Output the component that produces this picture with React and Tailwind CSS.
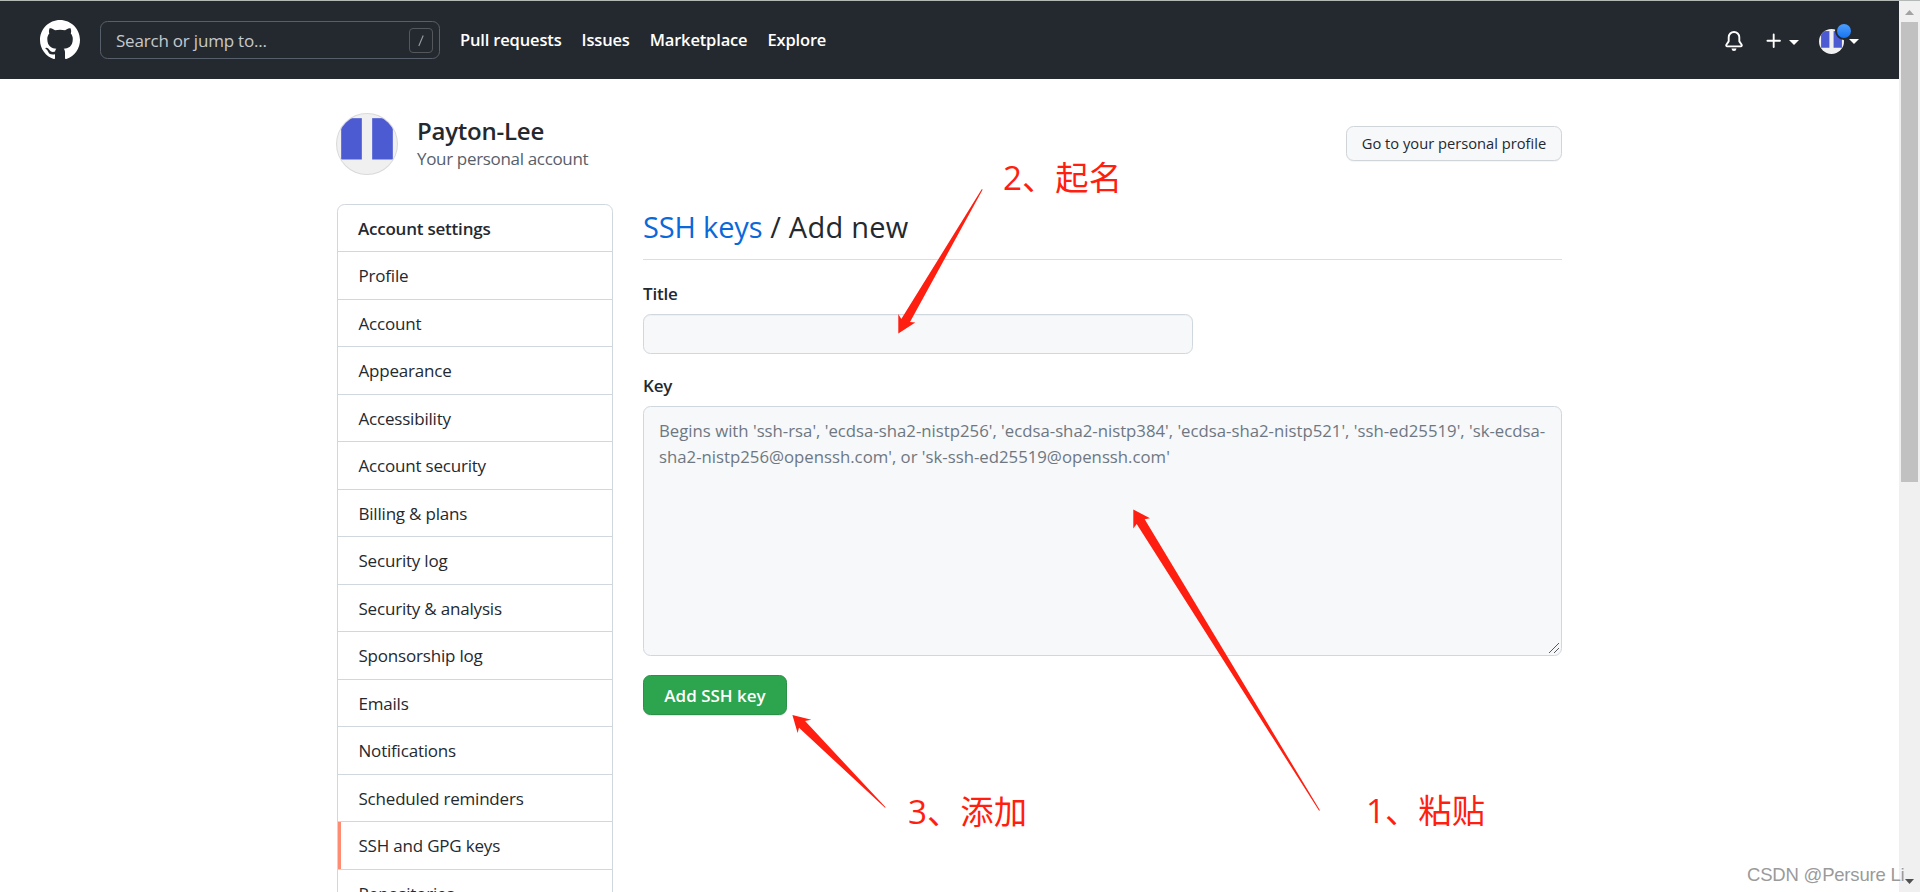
import React from "react";

const settings = [
  "Profile",
  "Account",
  "Appearance",
  "Accessibility",
  "Account security",
  "Billing & plans",
  "Security log",
  "Security & analysis",
  "Sponsorship log",
  "Emails",
  "Notifications",
  "Scheduled reminders",
  "SSH and GPG keys",
  "Repositories",
];

const navLinks = ["Pull requests", "Issues", "Marketplace", "Explore"];

function Identicon({ className }) {
  return (
    <svg viewBox="0 0 420 420" className={className}>
      <rect width="420" height="420" fill="#f0f0f0" />
      <rect x="35" y="35" width="140" height="280" fill="#4d5bd2" />
      <rect x="245" y="35" width="140" height="280" fill="#4d5bd2" />
    </svg>
  );
}

function Caret({ className }) {
  return (
    <svg viewBox="0 0 10 5" className={"h-[5px] w-[10px] fill-white " + className}>
      <path d="M0 0h10L5 5z" />
    </svg>
  );
}

function Header() {
  return (
    <header className="flex h-[78px] shrink-0 items-center bg-[#24292f] px-10 text-white">
      <svg viewBox="0 0 16 16" className="size-10 shrink-0 fill-white">
        <path
          fillRule="evenodd"
          d="M8 0C3.58 0 0 3.58 0 8c0 3.54 2.29 6.53 5.47 7.59.4.07.55-.17.55-.38 0-.19-.01-.82-.01-1.49-2.01.37-2.53-.49-2.69-.94-.09-.23-.48-.94-.82-1.13-.28-.15-.68-.52-.01-.53.63-.01 1.08.58 1.23.82.72 1.21 1.87.87 2.33.66.07-.52.28-.87.51-1.07-1.78-.2-3.64-.89-3.64-3.95 0-.87.31-1.59.82-2.15-.08-.2-.36-1.02.08-2.12 0 0 .67-.21 2.2.82.64-.18 1.32-.27 2-.27.68 0 1.36.09 2 .27 1.53-1.04 2.2-.82 2.2-.82.44 1.1.16 1.92.08 2.12.51.56.82 1.27.82 2.15 0 3.07-1.87 3.75-3.65 3.95.29.25.54.73.54 1.48 0 1.07-.01 1.93-.01 2.2 0 .21.15.46.55.38A8.013 8.013 0 0016 8c0-4.42-3.58-8-8-8z"
        />
      </svg>
      <div className="ml-5 flex h-[38px] w-[340px] items-center justify-between rounded-[7.5px] border border-[#57606a] pr-1.5 pl-[15px]">
        <span className="pt-px text-[17px] tracking-[-0.2px] text-[#c6c9cc]">Search or jump to...</span>
        <svg viewBox="0 0 24 25" className="h-[25px] w-6" fill="none">
          <rect x="0.5" y="0.5" width="23" height="24" rx="3.5" stroke="#54585d" />
          <path d="M14.2 7.5 9.8 18" stroke="#9a9da1" strokeWidth="1.1" />
        </svg>
      </div>
      <nav className="ml-5 flex gap-5 pt-px text-[16.5px] font-semibold tracking-[-0.16px]">
        {navLinks.map((link) => (
          <a key={link}>{link}</a>
        ))}
      </nav>
      <div className="ml-auto flex items-center">
        <svg viewBox="0 0 16 16" className="mt-0.5 size-5 fill-white">
          <path d="M8 16a2 2 0 001.985-1.75c.017-.137-.097-.25-.235-.25h-3.5c-.138 0-.252.113-.235.25A2 2 0 008 16z" />
          <path
            fillRule="evenodd"
            d="M8 1.5A3.5 3.5 0 004.5 5v2.947c0 .346-.102.683-.294.97l-1.703 2.556a.018.018 0 00-.003.01l.001.006c0 .002.002.004.004.006a.017.017 0 00.006.004l.007.001h10.964l.007-.001a.016.016 0 00.006-.004.016.016 0 00.004-.006l.001-.007a.017.017 0 00-.003-.01l-1.703-2.554a1.75 1.75 0 01-.294-.97V5A3.5 3.5 0 008 1.5zM3 5a5 5 0 0110 0v2.947c0 .05.015.098.042.139l1.703 2.555A1.518 1.518 0 0113.482 13H2.518a1.518 1.518 0 01-1.263-2.36l1.703-2.554A.25.25 0 003 7.947V5z"
          />
        </svg>
        <svg viewBox="0 0 16 16" className="mt-0.5 ml-[19.5px] size-5 fill-white">
          <path d="M7.75 2a.75.75 0 01.75.75V7h4.25a.75.75 0 110 1.5H8.5v4.25a.75.75 0 11-1.5 0V8.5H2.75a.75.75 0 010-1.5H7V2.75A.75.75 0 017.75 2z" />
        </svg>
        <Caret className="mt-[5px] ml-[5.5px]" />
        <div className="relative mt-[3px] ml-5 size-[25px]">
          <Identicon className="size-[25px] rounded-full" />
          <span className="absolute -top-[7px] left-4 size-[18px] rounded-full border-2 border-[#24292f] bg-linear-to-b from-[#54a3ff] to-[#006eed] bg-origin-border" />
        </div>
        <Caret className="mt-[3px] ml-[5px]" />
      </div>
    </header>
  );
}

function Sidebar() {
  return (
    <nav className="w-[276px] shrink-0 rounded-t-[7.5px] border border-[#d0d7de] text-[17px] tracking-[-0.2px]">
      <h2 className="flex h-[47.5px] items-center border-b border-[#d0d7de] pt-px pl-5 font-semibold tracking-[-0.22px]">
        Account settings
      </h2>
      {settings.map((item) => (
        <a
          key={item}
          className={
            "flex h-[47.5px] items-center border-b border-[#d0d7de] pt-px pl-[20.5px] " +
            (item === "SSH and GPG keys"
              ? "bg-[linear-gradient(#fd8c73,#fd8c73)] bg-[length:3px_100%] bg-no-repeat"
              : "")
          }
        >
          {item}
        </a>
      ))}
    </nav>
  );
}

function KeyForm() {
  return (
    <main className="flex flex-1 flex-col">
      <h1 className="h-[56.25px] border-b border-[#d8dee4] text-[29px] leading-[46px] tracking-[0.25px]">
        <a className="tracking-[-0.15px] text-[#0969da]">SSH keys</a> / Add new
      </h1>
      <label className="mt-[21.9px] text-[17px] leading-6 font-semibold tracking-[-0.2px]">Title</label>
      <input className="mt-[8.1px] h-10 w-[550px] rounded-[7.5px] border border-[#d0d7de] bg-[#f6f8fa] shadow-[inset_0_1px_0_rgba(208,215,222,0.2)]" />
      <label className="mt-[19.9px] text-[17px] leading-6 font-semibold tracking-[-0.2px]">Key</label>
      <div className="relative mt-[8.1px] h-[250px]">
        <textarea
          className="block h-full w-full resize-none rounded-[7.5px] border border-[#d0d7de] bg-[#f6f8fa] pt-[11px] pr-3 pl-[15px] text-[16.75px] leading-[26.25px] placeholder:text-[#6e7781]"
          placeholder="Begins with 'ssh-rsa', 'ecdsa-sha2-nistp256', 'ecdsa-sha2-nistp384', 'ecdsa-sha2-nistp521', 'ssh-ed25519', 'sk-ecdsa-sha2-nistp256@openssh.com', or 'sk-ssh-ed25519@openssh.com'"
        />
        <svg viewBox="0 0 10 10" className="absolute right-[3px] bottom-[3px] size-2.5 stroke-[#57595c]" fill="none">
          <path d="M0 10 10 0M5 10l5-5" />
        </svg>
      </div>
      <button className="mt-[19px] h-10 w-36 rounded-[7.5px] border border-[#2a9147] bg-[#2da44e] pt-px text-[17px] font-semibold text-white shadow-[0_1px_0_rgba(27,31,36,0.1)]">
        Add SSH key
      </button>
    </main>
  );
}

function Scrollbar() {
  return (
    <div className="flex w-[21px] shrink-0 flex-col items-center bg-[#f0f0f0] pt-[9px] pb-2">
      <svg viewBox="0 0 9 5" className="h-[5px] w-[9px] fill-[#a3a3a3]">
        <path d="M4.5 0 9 5H0z" />
      </svg>
      <div className="mt-[7px] h-[460px] w-[17px] bg-[#c1c1c1]" />
      <svg viewBox="0 0 9 5" className="mt-auto h-[5px] w-[9px] fill-[#505050]">
        <path d="M0 0h9L4.5 5z" />
      </svg>
    </div>
  );
}

function Annotations() {
  return (
    <div className="pointer-events-none absolute inset-x-0 -top-px h-[892px] font-['Open_Sans','Noto_Sans_CJK_SC',sans-serif] text-[33.3px] leading-[40px] whitespace-nowrap text-[#ff1f10]">
      <svg viewBox="0 0 1920 892" className="absolute inset-0 h-[892px] w-[1920px] fill-[#ff1f10]">
        <path d="M898.3 333.5V314l3 5 80.4-129.7 1 .2L910 322l5.3.4z" />
        <path d="M1133.3 509.5 1150 518.3 1144.7 519.3 1319.9 810.3 1319.1 810.8 1136.7 524 1133.3 528.5z" />
        <path d="M792.4 715 811.3 719.7 805.1 721 885.6 807.3 885 807.8 799 727.7 797.6 733z" />
      </svg>
      <span className="absolute top-[157px] left-[1003px]">2、起名</span>
      <span className="absolute top-[790px] left-[1366px]">1、粘贴</span>
      <span className="absolute top-[791px] left-[908px]">3、添加</span>
      <span className="absolute top-[863px] left-[1747px] font-['Liberation_Sans',sans-serif] text-[18.5px] leading-6 tracking-[-0.2px] text-[#9a9a9a] [text-shadow:-1px_-1px_0_rgba(255,255,255,0.7)]">
        CSDN @Persure Li
      </span>
    </div>
  );
}

export default function App() {
  return (
    <div className="relative flex h-[892px] w-full overflow-hidden border-t border-[#b4b8b6] bg-white font-['Open_Sans','Noto_Sans',sans-serif] text-[#24292f]">
      <div className="flex min-w-0 flex-1 flex-col">
        <Header />
        <div className="ml-[337px] w-[1225px]">
          <div className="mt-[34px] flex h-[62px] items-center">
            <div className="-ml-px size-[62px] shrink-0 overflow-hidden rounded-full bg-[#d9d9d9] p-px">
              <div className="size-[60px] overflow-hidden rounded-full">
                <Identicon className="-m-px size-[62px]" />
              </div>
            </div>
            <div className="ml-[19px] pb-[1.5px]">
              <p className="text-[24px] leading-[31px] font-semibold tracking-[-0.23px]">Payton-Lee</p>
              <p className="text-[17px] leading-[25px] tracking-[-0.33px] text-[#57606a]">Your personal account</p>
            </div>
            <button className="mb-px ml-auto h-[35px] w-[216px] rounded-[7.5px] border border-[#d0d5da] bg-[#f6f8fa] text-[14.7px] font-medium shadow-[0_1px_0_rgba(27,31,36,0.04)]">
              Go to your personal profile
            </button>
          </div>
          <div className="mt-[28.75px] flex items-start gap-[30px]">
            <Sidebar />
            <KeyForm />
          </div>
        </div>
      </div>
      <Scrollbar />
      <Annotations />
    </div>
  );
}
